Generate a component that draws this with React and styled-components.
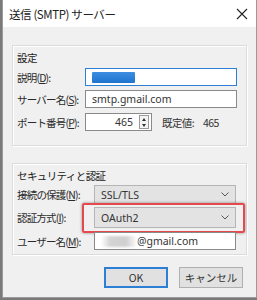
import React from "react"
import styled, { createGlobalStyle } from "styled-components"

const Global = createGlobalStyle`
  html, body {
    margin: 0;
    padding: 0;
    background: #7a7a7a;
  }
  body {
    font-family: "Noto Sans", "Noto Sans CJK JP", sans-serif;
    color: #1a1a1a;
  }
`

const Window = styled.div`
  width: 253px;
  height: 297px;
  margin-left: 2px;
  background: #f0f0f0;
  border: 1px solid #9a9a9a;
  border-top: none;
  display: flex;
  flex-direction: column;
  overflow: hidden;
`

const TitleBar = styled.div`
  height: 27px;
  flex: none;
  background: #fff;
  display: flex;
  align-items: center;
  justify-content: space-between;
  padding: 0 8px 0 6px;
  font-family: "Noto Sans CJK JP", sans-serif;
  font-size: 11.5px;
  letter-spacing: -0.4px;
  color: #222;
`

const Body = styled.div`
  flex: 1;
  display: flex;
  flex-direction: column;
  padding: 18px 9px 0 9px;
`

const Group = styled.section`
  flex: none;
  margin-bottom: ${(p) => p.$gap || 0}px;
  padding: 6px 4px 0 4px;
  height: ${(p) => p.$h}px;
  box-sizing: border-box;
  border: 1px solid #dcdcdc;
  box-shadow: inset 1px 1px 0 #fff, 1px 1px 0 #fff;
  display: flex;
  flex-direction: column;
`

const GroupTitle = styled.div`
  font-family: "Noto Sans CJK JP", sans-serif;
  font-size: 10.5px;
  letter-spacing: -0.6px;
  line-height: 12px;
  height: 12px;
  margin-bottom: ${(p) => p.$mb}px;
`

const Row = styled.div`
  display: grid;
  grid-template-columns: ${(p) => p.$label}px 1fr;
  align-items: center;
  height: ${(p) => p.$h || 18}px;
  margin-bottom: ${(p) => p.$mb || 0}px;
  position: relative;
`

const Label = styled.span`
  font-family: "Noto Sans CJK JP", sans-serif;
  font-size: 10.5px;
  letter-spacing: -0.8px;
  color: #2a2a2a;
  white-space: nowrap;
  u {
    text-decoration: underline;
    text-underline-offset: 1px;
  }
`

const TextBox = styled.div`
  height: 18px;
  box-sizing: border-box;
  width: ${(p) => (p.$w ? p.$w + "px" : "auto")};
  margin-right: ${(p) => p.$mr || 0}px;
  background: #fff;
  border: 1px solid ${(p) => (p.$focus ? "#2b7fd4" : "#8a8a8a")};
  display: flex;
  align-items: center;
  padding: 0 ${(p) => (p.$right ? 2 : 6)}px;
  justify-content: ${(p) => (p.$right ? "flex-end" : "flex-start")};
  font-size: 10.5px;
  color: #333;
  gap: 2px;
`

const Selected = styled.span`
  width: 43px;
  height: 11px;
  background: linear-gradient(#3d8ee0, #1f74cf);
  border-radius: 1px;
`

const Blurred = styled.span`
  width: 36px;
  height: 11px;
  margin-right: -2px;
  background: linear-gradient(90deg, #fff 0%, #d4d4d4 25%, #cfcfcf 70%, #fff 100%);
  filter: blur(1px);
`

const Spinner = styled.div`
  width: 10px;
  height: 14px;
  border: 1px solid #9a9a9a;
  box-sizing: border-box;
  background: #f4f4f4;
  display: flex;
  flex-direction: column;
  align-items: center;
  justify-content: space-around;
  margin-left: 4px;
`

const Arrow = styled.span`
  width: 0;
  height: 0;
  border-left: 2.5px solid transparent;
  border-right: 2.5px solid transparent;
  ${(p) =>
    p.$up ? "border-bottom: 3px solid #333;" : "border-top: 3px solid #333;"}
`

const PortLine = styled.div`
  display: flex;
  align-items: center;
`

const Default = styled.span`
  margin-left: 10px;
  font-family: "Noto Sans CJK JP", sans-serif;
  font-size: 10.5px;
  letter-spacing: -0.6px;
  color: #333;
  display: flex;
  gap: 9px;
`

const Combo = styled.div`
  height: ${(p) => p.$h || 19}px;
  box-sizing: border-box;
  margin-right: 6px;
  background: #e3e3e3;
  border: 1px solid #b5b5b5;
  display: flex;
  align-items: center;
  justify-content: space-between;
  padding: 0 6px 0 6px;
  font-size: 10.5px;
  color: #333;
`

const Highlight = styled.div`
  position: absolute;
  left: 65px;
  right: -3px;
  top: -4px;
  bottom: -5px;
  border: 2px solid #e5484d;
  border-radius: 2px;
  box-shadow: 0 0 3px rgba(0, 0, 0, 0.45);
  pointer-events: none;
`

const Buttons = styled.div`
  display: flex;
  justify-content: flex-end;
  gap: 11px;
  padding: 12px 4px 0 0;
`

const Button = styled.button`
  width: 64px;
  height: 21px;
  box-sizing: border-box;
  background: #e1e1e1;
  border: ${(p) => (p.$primary ? "2px solid #2b7fd4" : "1px solid #b0b0b0")};
  font-family: "Noto Sans CJK JP", sans-serif;
  font-size: 10.5px;
  color: #333;
  padding: 0;
`

function Chevron() {
  return (
    <svg width="8" height="5" viewBox="0 0 8 5">
      <path d="M0.5 0.5 L4 4 L7.5 0.5" fill="none" stroke="#555" strokeWidth="1" />
    </svg>
  )
}

function Close() {
  return (
    <svg width="12" height="12" viewBox="0 0 12 12">
      <path d="M1 1 L11 11 M11 1 L1 11" stroke="#222" strokeWidth="1.1" />
    </svg>
  )
}

export default function App() {
  return (
    <>
      <Global />
      <Window>
        <TitleBar>
          <span>送信 (SMTP) サーバー</span>
          <Close />
        </TitleBar>
        <Body>
          <Group $h={101} $gap={17}>
            <GroupTitle $mb={4}>設定</GroupTitle>
            <Row $label={68} $mb={4}>
              <Label>説明(<u>D</u>):</Label>
              <TextBox $focus $mr={5}>
                <Selected />
              </TextBox>
            </Row>
            <Row $label={68} $mb={5}>
              <Label>サーバー名(<u>S</u>):</Label>
              <TextBox $mr={5}>smtp.gmail.com</TextBox>
            </Row>
            <Row $label={68}>
              <Label>ポート番号(<u>P</u>):</Label>
              <PortLine>
                <TextBox $w={67} $right>
                  465
                  <Spinner>
                    <Arrow $up />
                    <Arrow />
                  </Spinner>
                </TextBox>
                <Default>
                  <span>既定値:</span>
                  <span>465</span>
                </Default>
              </PortLine>
            </Row>
          </Group>
          <Group $h={92}>
            <GroupTitle $mb={3}>セキュリティと認証</GroupTitle>
            <Row $label={77} $h={19} $mb={3}>
              <Label>接続の保護(<u>N</u>):</Label>
              <Combo>
                SSL/TLS
                <Chevron />
              </Combo>
            </Row>
            <Row $label={77} $h={21} $mb={4}>
              <Label>認証方式(<u>I</u>):</Label>
              <Combo $h={21}>
                OAuth2
                <Chevron />
              </Combo>
              <Highlight />
            </Row>
            <Row $label={77}>
              <Label>ユーザー名(<u>M</u>):</Label>
              <TextBox $mr={6}>
                <Blurred />
                @gmail.com
              </TextBox>
            </Row>
          </Group>
          <Buttons>
            <Button $primary>OK</Button>
            <Button>キャンセル</Button>
          </Buttons>
        </Body>
      </Window>
    </>
  )
}
